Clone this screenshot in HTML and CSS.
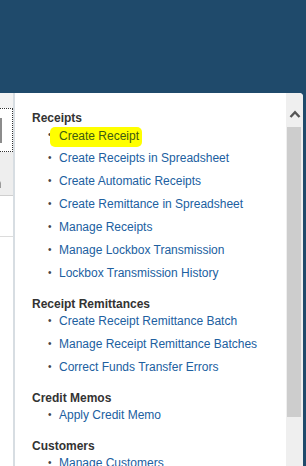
FILE: index.html
```html
<!DOCTYPE html>
<html lang="en">

<head>
    <meta charset="UTF-8">
    <meta name="viewport" content="width=device-width, initial-scale=1.0">
    <title>Receivables</title>
    <link rel="stylesheet" href="styles.css">
</head>

<body>

    <div class="header"></div>

    <div class="main">
        <!-- page behind the popup -->
        <div class="side">
            <div class="side-top"></div>
            <div class="side-field">
                <div class="side-bar"></div>
            </div>
            <div class="side-tab">
                <div class="side-arrow"></div>
            </div>
            <div class="side-row"></div>
        </div>
        <div class="edge"></div>

        <div class="panel">
            <div class="menu">
                <div class="group">
                    <h3>Receipts</h3>
                    <ul>
                        <li><a href="#" class="mark">Create Receipt</a></li>
                        <li><a href="#">Create Receipts in Spreadsheet</a></li>
                        <li><a href="#">Create Automatic Receipts</a></li>
                        <li><a href="#">Create Remittance in Spreadsheet</a></li>
                        <li><a href="#">Manage Receipts</a></li>
                        <li><a href="#">Manage Lockbox Transmission</a></li>
                        <li><a href="#">Lockbox Transmission History</a></li>
                    </ul>
                </div>
                <div class="group">
                    <h3>Receipt Remittances</h3>
                    <ul>
                        <li><a href="#">Create Receipt Remittance Batch</a></li>
                        <li><a href="#">Manage Receipt Remittance Batches</a></li>
                        <li><a href="#">Correct Funds Transfer Errors</a></li>
                    </ul>
                </div>
                <div class="group">
                    <h3>Credit Memos</h3>
                    <ul>
                        <li><a href="#">Apply Credit Memo</a></li>
                    </ul>
                </div>
                <div class="group">
                    <h3>Customers</h3>
                    <ul>
                        <li><a href="#">Manage Customers</a></li>
                    </ul>
                </div>
            </div>

            <div class="scrollbar">
                <svg class="scroll-up" width="12" height="10" viewBox="0 0 12 10">
                    <path d="M1.5 8 L6 3.2 L10.5 8" fill="none" stroke="#555" stroke-width="2.4" />
                </svg>
                <div class="thumb"></div>
            </div>
        </div>
    </div>

</body>

</html>
```

FILE: styles.css
```css
/* Basic styling */
body {
    font-family: 'Liberation Sans', Arial, sans-serif;
    background-color: #1f4a6b;
    margin: 0;
    padding: 0;
    height: 466px;
    overflow: hidden;
}

.header {
    height: 93px;
}

.main {
    display: flex;
    height: 373px;
    padding-right: 3px;
}

/* strip of the page showing on the left */
.side {
    width: 13px;
    background-color: #fff;
    display: flex;
    flex-direction: column;
}

.side-top {
    height: 15px;
    background-color: #f3f3f3;
}

.side-field {
    height: 42px;
    background-color: #fff;
    border: 1px dotted #333;
    border-left: none;
    display: flex;
    align-items: center;
}

.side-bar {
    width: 2px;
    height: 25px;
    background-color: #8c8c8c;
}

.side-tab {
    height: 44px;
    background-color: #eeeeee;
    border-bottom: 1px solid #cfcfcf;
    display: flex;
    align-items: flex-end;
    padding-bottom: 7px;
    box-sizing: border-box;
}

.side-arrow {
    width: 0;
    height: 0;
    border-bottom: 7px solid #9a9a9a;
    border-left: 4px solid transparent;
    margin-left: -3px;
}

.side-row {
    height: 40px;
    border-bottom: 1px solid #dcdcdc;
}

.edge {
    width: 2px;
    background-color: #d7dde2;
}

/* popup */
.panel {
    flex: 1;
    display: flex;
    background-color: #fff;
    border-top-right-radius: 4px;
    overflow: hidden;
}

.menu {
    flex: 1;
    padding: 18px 0 0 17px;
}

.group + .group {
    margin-top: 17px;
}

h3 {
    font-size: 12px;
    line-height: 14px;
    font-weight: bold;
    color: #333;
    margin: 0;
}

ul {
    list-style: none;
    margin: 3px 0 0;
    padding: 0;
}

li {
    font-size: 12px;
    line-height: 14px;
    height: 14px;
    white-space: nowrap;
}

li + li {
    margin-top: 9px;
}

li::before {
    content: "\2022";
    display: inline-block;
    vertical-align: top;
    width: 11px;
    margin-left: 16px;
    color: #444;
    font-size: 10px;
    line-height: 14px;
}

a {
    color: #20609f;
    text-decoration: none;
}

a.mark {
    color: #3e5a12;
    background-color: #ffff00;
    border-radius: 5px;
    padding: 1.5px 3px 5px 9px;
    margin-left: -9px;
}

.scrollbar {
    width: 17px;
    background-color: #efefef;
    display: flex;
    flex-direction: column;
    align-items: center;
}

.scroll-up {
    margin-top: 16px;
}

.thumb {
    width: 14px;
    height: 290px;
    margin-top: 8px;
    margin-left: -2px;
    background-color: #cdcdcd;
}
```
